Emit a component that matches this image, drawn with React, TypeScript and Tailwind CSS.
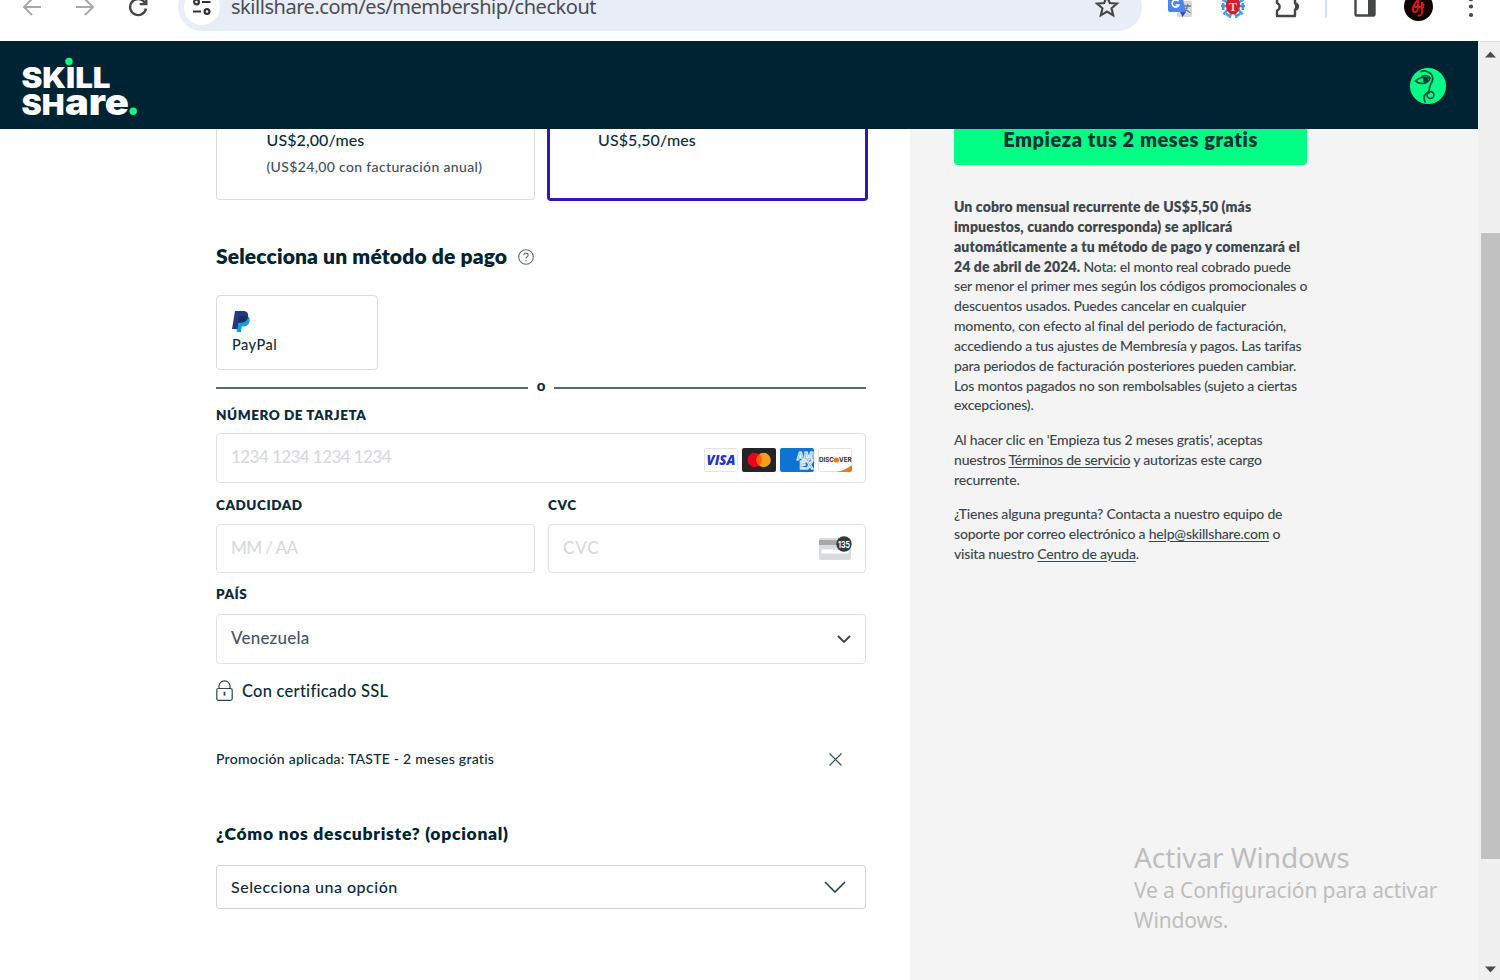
import React from 'react';

const BrowserBar = () => (
    <div className="h-[41px] shrink-0 overflow-hidden bg-white">
        <div className="-mt-[17px] flex h-12 items-center">
            <svg className="ml-[21px] h-6 w-6 shrink-0 text-[#a9a9ab]" viewBox="0 0 24 24" fill="none" stroke="currentColor" strokeWidth="2">
                <path d="M20 12H3M11 4l-8 8 8 8" />
            </svg>
            <svg className="ml-[28px] h-6 w-6 shrink-0 text-[#a9a9ab]" viewBox="0 0 24 24" fill="none" stroke="currentColor" strokeWidth="2">
                <path d="M3 12h17M12 4l8 8-8 8" />
            </svg>
            <svg className="ml-[29px] h-6 w-6 shrink-0 text-[#454746]" viewBox="0 0 24 24" fill="none" stroke="currentColor" strokeWidth="2.4">
                <path d="M20 13.5A8 8 0 1 1 18 6.6l2 2" />
                <path d="M20.3 2.5v6.6h-6.6" />
            </svg>
            <div className="ml-[28px] flex h-12 w-[964px] shrink-0 items-center rounded-full bg-[#e9edf8] pl-[6px]">
                <div className="flex h-9 w-9 shrink-0 items-center justify-center rounded-full bg-white">
                    <svg className="-mt-[3px] h-5 w-5 text-[#333]" viewBox="0 0 20 20" fill="none" stroke="currentColor" strokeWidth="2.2">
                        <circle cx="4.5" cy="6" r="2.4" />
                        <path d="M10 6h8.5M1 15.500h8" />
                        <circle cx="15" cy="15.500" r="2.400" />
                    </svg>
                </div>
                <span className="ml-[11px] font-['Noto_Sans',sans-serif] text-[20px] leading-6 tracking-[-0.46px] text-[#4b4d52]">skillshare.com/es/membership/checkout</span>
                <svg className="mr-[22px] ml-auto h-[26px] w-[26px] text-[#454746]" viewBox="0 0 24 24" fill="none" stroke="currentColor" strokeWidth="2">
                    <path d="M12 2.200l2.600 6.100 6.600.6-5 4.300 1.500 6.500L12 16.200l-5.700 3.500 1.500-6.500-5-4.300 6.600-.6z" />
                </svg>
            </div>
            <svg className="ml-[26px] h-6 w-6 shrink-0" viewBox="0 0 24 24">
                <rect x="9" y="6" width="15" height="16" rx="1.5" fill="#d5d7da" />
                <path d="M0 0h14l4 17H2a2 2 0 0 1-2-2z" fill="#4a86e8" />
                <path d="M12 17h6l-3.500 5z" fill="#3450b8" />
                <path d="M10.500 6.200A3.600 3.600 0 1 0 11 10H7.600" fill="none" stroke="#fff" strokeWidth="1.6" />
                <path d="M16 11h7M19.500 9v2c-.5 3-2 5-3 6M17.500 13c1 2 3 4 5 5" fill="none" stroke="#707a80" strokeWidth="1.3" />
            </svg>
            <svg className="ml-[29px] h-6 w-6 shrink-0" viewBox="0 0 24 24">
                <g fill="none" stroke="#3e9be8" strokeWidth="2.400">
                    <path d="M0 11h24M1.500 4.500L7 8M22.500 4.500L17 8M2.500 19.500L7 14M21.500 19.500L17 14M8.500 22.800L10 18M15.500 22.800L14 18" />
                    <path d="M2.200 8v7M21.800 8v7M5 18.500l3 2.500M19 18.500L16 21" />
                </g>
                <path d="M12 1c4 0 7 3 7 9 0 5.500-3 9.500-7 9.500S5 15.500 5 10c0-6 3-9 7-9z" fill="#d3202e" />
                <text x="12" y="15.500" textAnchor="middle" fontSize="12" fontWeight="700" fontFamily="Liberation Serif, serif" fill="#f2c9cc">T</text>
            </svg>
            <svg className="ml-[28px] h-7 w-7 shrink-0 text-[#454746]" viewBox="0 0 28 28" fill="none" stroke="currentColor" strokeWidth="2.4">
                <path d="M4 4h6a3 3 0 0 1 6 0h6v6.500a3 3 0 0 1 0 6v6.500H4v-5.500a4 4 0 0 0 0-7.500z" strokeLinejoin="round" />
                <path d="M22 10.500a3 3 0 0 1 0 6z" fill="currentColor" stroke="none" />
            </svg>
            <div className="ml-[24px] h-[22px] w-[2px] shrink-0 bg-[#d0e1fb]" />
            <svg className="ml-[27px] h-6 w-[22px] shrink-0" viewBox="0 0 22 24">
                <rect x="1.500" y="2" width="19" height="18.500" rx="1" fill="none" stroke="#454746" strokeWidth="2.4" />
                <path d="M14 2h7v18.500h-7z" fill="#454746" />
            </svg>
            <svg className="ml-[28px] h-[29px] w-[29px] shrink-0" viewBox="0 0 29 29">
                <circle cx="14.500" cy="13.500" r="14.500" fill="#0d0303" />
                <path d="M14 7c-3 3-6 7-5 11 2 3 5 0 5-3V5M18 9v11c-1 3-3 3-4 2M9 14h11M19 5v2M20 11l-3 6" fill="none" stroke="#e01212" strokeWidth="2" />
            </svg>
            <svg className="ml-[33px] h-6 w-[10px] shrink-0" viewBox="0 0 10 24" fill="#454746">
                <circle cx="5" cy="4" r="2.300" />
                <circle cx="5" cy="11.500" r="2.100" />
                <circle cx="5" cy="20" r="2.100" />
            </svg>
        </div>
    </div>
);

const Logo = () => (
    <svg className="mt-[4px] ml-[20px] h-[66px] w-[120px]" viewBox="20 54 120 66" fill="#fff" fontFamily="Inter, sans-serif" fontWeight="900">
        <text x="21.500" y="88.300" fontSize="28.500" textLength="89" lengthAdjust="spacingAndGlyphs">SKILL</text>
        <text x="21.500" y="115" fontSize="28.500" textLength="43" lengthAdjust="spacingAndGlyphs">SH</text>
        <text x="65" y="115" fontSize="37" textLength="64" lengthAdjust="spacingAndGlyphs">are</text>
        <circle cx="69" cy="61.500" r="3.700" fill="#00ff84" />
        <circle cx="133.200" cy="111.200" r="3.700" fill="#00ff84" />
    </svg>
);

const SiteHeader = () => (
    <header className="flex h-[88px] shrink-0 items-center justify-between bg-[#002333]">
        <Logo />
        <svg className="mt-px mr-[32px] h-9 w-9" viewBox="0 0 36 36">
            <circle cx="18" cy="18" r="18" fill="#00ff84" />
            <g fill="none" stroke="#04503f" strokeWidth="1.7" strokeLinecap="round">
                <path d="M11 3.500c4-2 13 1 11.500 8.500-.5 3-2.500 4-3 8l-.8 5" />
                <path d="M5.500 13c4-4 9-4.500 14.500-2.500-2 5.500-10 6.500-14.500 2.500z" />
                <path d="M12 8.500c3-1.500 6-1 8 1" />
                <circle cx="20.500" cy="27" r="3.400" />
                <path d="M18 24c-4 2-4.500 6-3 10" />
            </g>
            <circle cx="15.500" cy="12" r="2.500" fill="#063b3a" />
        </svg>
    </header>
);

const CardBrands = () => (
    <div className="mt-[3px] flex gap-[4px]">
        <svg className="h-6 w-[34px]" viewBox="0 0 34 24">
            <rect x=".5" y=".5" width="33" height="23" rx="1" fill="#fff" stroke="#e3e3e6" />
            <text x="2.500" y="17" fontFamily="Open Sans, sans-serif" fontSize="14" fontWeight="800" fontStyle="italic" textLength="29" lengthAdjust="spacingAndGlyphs" fill="#2337c5">VISA</text>
        </svg>
        <svg className="h-6 w-[34px]" viewBox="0 0 34 24">
            <rect width="34" height="24" rx="2" fill="#252525" />
            <circle cx="12.700" cy="12" r="7.200" fill="#eb001b" />
            <circle cx="21.600" cy="12" r="7.200" fill="#f79e1b" />
            <path d="M17.150 6.340a7.200 7.200 0 0 1 0 11.320 7.200 7.200 0 0 1 0-11.320z" fill="#ff5f00" />
        </svg>
        <svg className="h-6 w-[34px]" viewBox="0 0 34 24">
            <rect width="34" height="24" rx="2" fill="#0d74d1" />
            <g fontFamily="Inter, sans-serif" fontWeight="700" fontSize="10.500" fill="none" stroke="#fff" strokeWidth=".9">
                <text x="16.500" y="12" textLength="17" lengthAdjust="spacingAndGlyphs">AM</text>
                <text x="19.500" y="20.500" textLength="14" lengthAdjust="spacingAndGlyphs">EX</text>
            </g>
        </svg>
        <svg className="h-6 w-[34px]" viewBox="0 0 34 24">
            <rect x=".5" y=".5" width="33" height="23" rx="1" fill="#fff" stroke="#e3e3e6" />
            <g fontFamily="Inter, sans-serif" fontWeight="700" fontSize="6.500" fill="#2b2b2b">
                <text x="1" y="14.200" textLength="15" lengthAdjust="spacingAndGlyphs">DISC</text>
                <text x="21" y="14.200" textLength="12.500" lengthAdjust="spacingAndGlyphs">VER</text>
            </g>
            <circle cx="18.500" cy="12" r="2.600" fill="#f27712" />
            <path d="M34 17v5a2 2 0 0 1-2 2H18c7-1 12-4 16-7z" fill="#f27712" />
        </svg>
    </div>
);

const FieldLabel = ({ children, className = '' }: { children: React.ReactNode; className?: string }) => (
    <div className={`h-4 text-[13.5px] leading-[17px] font-extrabold tracking-[0.55px] text-[#0b2b3a] ${className}`}>{children}</div>
);

const PaymentForm = () => (
    <section className="w-[910px] shrink-0 bg-white pl-[216px] font-medium text-[#0b2b3a]">
        <div className="flex gap-3">
            <div className="h-[71px] w-[319px] rounded-b-[4px] border border-t-0 border-[#dcdcdf] pt-[1px] pl-[49.5px]">
                <p className="text-[16px] leading-5 tracking-[0.1px]">US$2,00/mes</p>
                <p className="mt-[7px] text-[14px] leading-5 tracking-[0.35px] text-[#43505a]">(US$24,00 con facturación anual)</p>
            </div>
            <div className="h-[72px] w-[321px] rounded-b-[4px] border-[3px] border-t-0 border-[#3217b4] pt-[1px] pl-[48px]">
                <p className="text-[16px] leading-5 tracking-[0.1px]">US$5,50/mes</p>
            </div>
        </div>

        <div className="mt-[41px] flex h-7 items-center">
            <h2 className="w-[292px] text-[21px] leading-7 font-extrabold tracking-[0.15px] whitespace-nowrap text-[#002333]">Selecciona un método de pago</h2>
            <svg className="mt-[2px] ml-[10px] h-4 w-4" viewBox="0 0 16 16" fill="none" stroke="#5d6f79" strokeWidth="1.1">
                <circle cx="8" cy="8" r="7.300" />
                <path d="M5.800 6.200C5.800 3.300 10.200 3.400 10.200 6c0 1.800-2.200 1.700-2.200 3.600M8 11v1.300" />
            </svg>
        </div>

        <div className="mt-[25px] h-[75px] w-[162px] rounded-[4px] border border-[#dcdcdf] pt-[15px] pl-[15px]">
            <svg className="h-[21px] w-[18px]" viewBox="0 0 18 21">
                <path d="M6 5h9.500c2 1 2.500 3 2 5.500-.7 3.500-3 5-6.300 5H9.800L8.900 21H4.600z" fill="#179bd7" />
                <path d="M3 0h8c4 0 5.700 2.200 5 5.800-.8 4-3.500 5.700-7.200 5.700H6.300L5.200 18H0z" fill="#253b80" />
                <path d="M7 5h8.800c-.3 5-3.500 6.500-7 6.500H6.300L5.200 18l-.5.500z" fill="#1c2c67" />
            </svg>
            <p className="mt-[3px] text-[14.500px] leading-5 tracking-[0.5px]">PayPal</p>
        </div>

        <div className="mt-[5px] flex h-5 w-[650px] items-center">
            <div className="mt-[5px] h-[2px] flex-1 bg-[#5a696e]" />
            <span className="w-[26px] text-center text-[15px] leading-5 font-black">o</span>
            <div className="mt-[5px] h-[2px] flex-1 bg-[#5a696e]" />
        </div>

        <FieldLabel className="mt-[12px]">NÚMERO DE TARJETA</FieldLabel>
        <div className="mt-[10px] flex h-[50px] w-[650px] items-center justify-between rounded-[4px] border border-[#e1e1e4] pr-[13px] pl-[14px]">
            <span className="-mt-[3px] text-[17px] tracking-[-0.56px] text-[#d8d9dd]">1234 1234 1234 1234</span>
            <CardBrands />
        </div>

        <div className="mt-[14px] flex gap-[13px]">
            <div className="w-[319px]">
                <FieldLabel>CADUCIDAD</FieldLabel>
                <div className="mt-[11px] flex h-[49px] items-center rounded-[4px] border border-[#e1e1e4] pl-[14px]">
                    <span className="-mt-[2px] text-[17px] tracking-[-0.6px] text-[#d8d9dd]">MM / AA</span>
                </div>
            </div>
            <div className="w-[318px]">
                <FieldLabel>CVC</FieldLabel>
                <div className="mt-[11px] flex h-[49px] items-center justify-between rounded-[4px] border border-[#e1e1e4] pr-[13px] pl-[14px]">
                    <span className="-mt-[2px] text-[17px] tracking-[0.8px] text-[#d8d9dd]">CVC</span>
                    <svg className="-mt-[1px] h-6 w-[34px]" viewBox="0 0 34 24">
                        <rect x="1" y="2" width="32" height="22" rx="2" fill="#d9dbdd" />
                        <path d="M1 4h32v5H1z" fill="#a5a9ab" />
                        <path d="M3.500 13.500h27v4h-27z" fill="#fff" />
                        <circle cx="26" cy="8" r="7.700" fill="#2f3b40" />
                        <text x="26" y="11.500" textAnchor="middle" fontFamily="Inter, sans-serif" fontSize="9" fontWeight="700" textLength="12" lengthAdjust="spacingAndGlyphs" fill="#fff">135</text>
                    </svg>
                </div>
            </div>
        </div>

        <FieldLabel className="mt-[13px]">PAÍS</FieldLabel>
        <div className="mt-[12px] flex h-[50px] w-[650px] items-center justify-between rounded-[4px] border border-[#e1e1e4] pr-[14px] pl-[14px]">
            <span className="-mt-[3px] text-[17px] tracking-[0.2px] text-[#4b5560]">Venezuela</span>
            <svg className="h-[10px] w-[14px]" viewBox="0 0 14 10" fill="none" stroke="#3a484e" strokeWidth="1.900">
                <path d="M1 2l6 6 6-6" />
            </svg>
        </div>

        <div className="mt-[17px] flex h-5 items-center">
            <svg className="-mt-px h-[21px] w-[17px]" viewBox="0 0 17 21" fill="none" stroke="#2a4450" strokeWidth="1.200">
                <rect x=".8" y="8.500" width="15.400" height="11.800" rx="1.500" />
                <path d="M3 8.500V6a5.500 5.200 0 0 1 11 0v2.500" />
                <path d="M8.500 11.800v3.800" strokeWidth="1.800" />
            </svg>
            <span className="ml-[9px] text-[16.500px] leading-5 tracking-[0.25px]">Con certificado SSL</span>
        </div>

        <div className="mt-[48px] flex h-5 w-[626px] items-center justify-between">
            <span className="text-[14px] leading-5 tracking-[0.25px]">Promoción aplicada: TASTE - 2 meses gratis</span>
            <svg className="h-[13px] w-[13px]" viewBox="0 0 13 13" stroke="#37505c" strokeWidth="1.200">
                <path d="M.5.500l12 12M12.500.500l-12 12" />
            </svg>
        </div>

        <p className="mt-[53px] text-[17.500px] leading-6 font-extrabold tracking-[0.7px] text-[#002333]">¿Cómo nos descubriste? (opcional)</p>
        <div className="mt-[19px] flex h-[44px] w-[650px] items-center justify-between rounded-[3px] border border-[#d3d4d7] pr-[19px] pl-[14px]">
            <span className="text-[16px] tracking-[0.5px]">Selecciona una opción</span>
            <svg className="h-3 w-[22px]" viewBox="0 0 22 12" fill="none" stroke="#1f3d4b" strokeWidth="1.500">
                <path d="M1 1l10 10L21 1" />
            </svg>
        </div>
    </section>
);

const Summary = () => (
    <aside className="flex-1 bg-[#f4f4f4] pl-[44px] text-[14px] leading-[19.85px] font-medium tracking-[-0.2px] whitespace-nowrap text-[#3d474d]">
        <div className="flex h-[36px] w-[353px] justify-center rounded-b-[4px] bg-[#00ff84]">
            <span className="-mt-[4px] text-[20px] leading-7 font-extrabold tracking-[0.55px] text-[#0a3338]">Empieza tus 2 meses gratis</span>
        </div>
        <div className="mt-[32px] font-extrabold tracking-[0.13px]">
            <p>Un cobro mensual recurrente de US$5,50 (más</p>
            <p>impuestos, cuando corresponda) se aplicará</p>
            <p>automáticamente a tu método de pago y comenzará el</p>
        </div>
        <p><b className="font-extrabold tracking-[0.1px]">24 de abril de 2024.</b> Nota: el monto real cobrado puede</p>
        <p>ser menor el primer mes según los códigos promocionales o</p>
        <p>descuentos usados. Puedes cancelar en cualquier</p>
        <p>momento, con efecto al final del periodo de facturación,</p>
        <p>accediendo a tus ajustes de Membresía y pagos. Las tarifas</p>
        <p>para periodos de facturación posteriores pueden cambiar.</p>
        <p>Los montos pagados no son rembolsables (sujeto a ciertas</p>
        <p>excepciones).</p>
        <p className="mt-[15px]">Al hacer clic en 'Empieza tus 2 meses gratis', aceptas</p>
        <p>nuestros <u className="underline-offset-2">Términos de servicio</u> y autorizas este cargo</p>
        <p>recurrente.</p>
        <p className="mt-[14px]">¿Tienes alguna pregunta? Contacta a nuestro equipo de</p>
        <p>soporte por correo electrónico a <u className="underline-offset-2">help@skillshare.com</u> o</p>
        <p>visita nuestro <u className="underline-offset-2">Centro de ayuda</u>.</p>
    </aside>
);

const Scrollbar = () => (
    <div className="flex w-[22px] shrink-0 flex-col items-end border-t border-[#e0e0e0] bg-[#f0f0f0]">
        <svg className="mt-[9px] mr-[4px] h-[7px] w-[11px]" viewBox="0 0 11 7" fill="#4d4d4d">
            <path d="M0 6.500L5.500.500 11 6.500z" />
        </svg>
        <div className="mt-[175px] h-[626px] w-[19px] bg-[#c1c1c1]" />
        <svg className="mt-auto mr-[4px] mb-[7px] h-[7px] w-[11px]" viewBox="0 0 11 7" fill="#4d4d4d">
            <path d="M0 .5l5.500 6 5.500-6z" />
        </svg>
    </div>
);

const App = () => {
    return (
        <div className="relative flex h-[980px] w-[1500px] flex-col overflow-hidden bg-white font-['Lato',sans-serif]">
            <BrowserBar />
            <div className="flex min-h-0 flex-1">
                <div className="flex w-[1478px] flex-col">
                    <SiteHeader />
                    <main className="flex min-h-0 flex-1">
                        <PaymentForm />
                        <Summary />
                    </main>
                </div>
                <Scrollbar />
            </div>
            {/* system watermark, sits over the page */}
            <div className="pointer-events-none absolute top-[839px] left-[1134px] font-['Noto_Sans',sans-serif] whitespace-nowrap text-[#bebebe]">
                <p className="text-[28px] leading-9 tracking-[-0.1px]">Activar Windows</p>
                <p className="mt-[1px] text-[21px] leading-[29.500px] tracking-[-0.12px]">Ve a Configuración para activar</p>
                <p className="text-[21px] leading-[29.500px] tracking-[-0.12px]">Windows.</p>
            </div>
        </div>
    );
};

export default App;
